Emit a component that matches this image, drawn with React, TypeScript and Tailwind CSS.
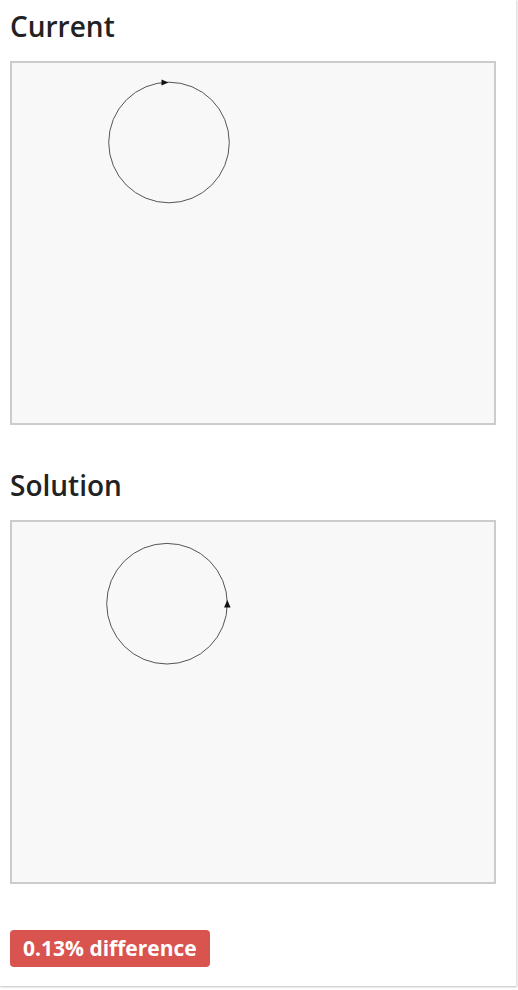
import React from 'react'

const FONT = { fontFamily: '"Open Sans", "Liberation Sans", sans-serif' }

function Canvas({ cx, cy, arrow }: { cx: number; cy: number; arrow: string }) {
  return (
    <div className="h-[364px] w-[486px] border-2 border-[#cccccc] bg-[#f8f8f8]">
      <svg width="482" height="360" className="block">
        <circle cx={cx} cy={cy} r="60.3" fill="none" stroke="#555" strokeWidth="1" />
        <polygon points={arrow} fill="#111" />
      </svg>
    </div>
  )
}

export default function App() {
  return (
    <div className="min-h-[990px] bg-white" style={FONT}>
      <div className="h-[986px] w-[517px] border-r border-[#e4e4e4] bg-white px-[10px] shadow-[0_1px_2px_rgba(0,0,0,0.25)]">
        {/* current */}
        <h2 className="pt-[8px] text-[28px] font-semibold leading-[36px] text-[#222]">Current</h2>
        <div className="mt-[17px]">
          <Canvas cx={157} cy={79.5} arrow="156.5,19.5 149.5,16.5 149.5,22.5" />
        </div>

        {/* solution */}
        <h2 className="mt-[42px] text-[28px] font-semibold leading-[36px] text-[#222]">Solution</h2>
        <div className="mt-[17px]">
          <Canvas cx={155} cy={81.7} arrow="215.3,78 212,85.5 218.6,85.5" />
        </div>

        <div className="mt-[46px] inline-flex h-[37px] items-center rounded-[4px] bg-[#d9534f] px-[13px] text-[21px] font-bold text-white">
          0.13% difference
        </div>
      </div>
    </div>
  )
}
